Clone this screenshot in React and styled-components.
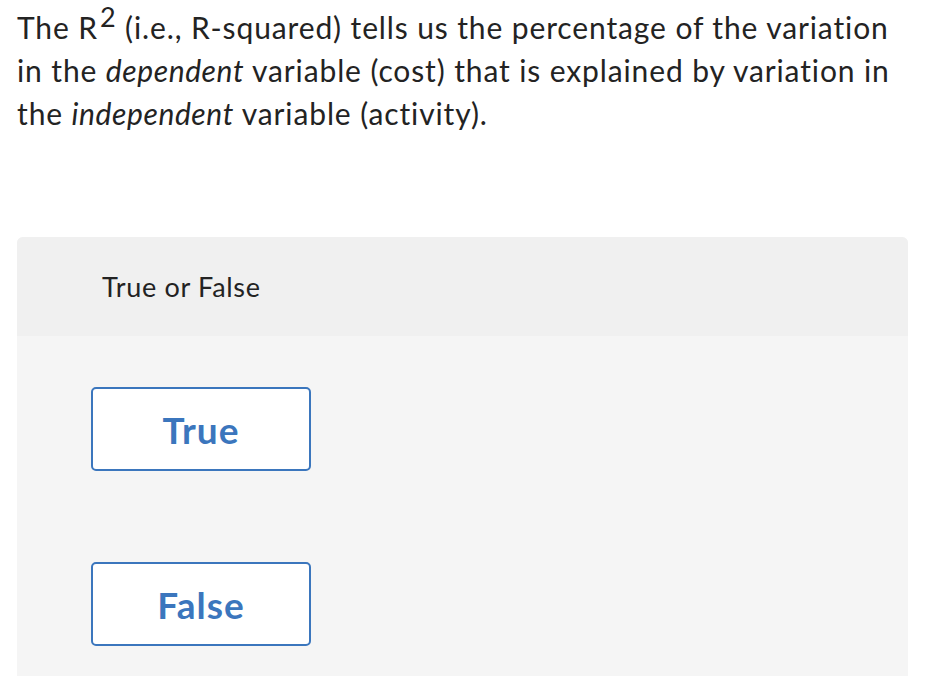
import React from "react"
import styled, { createGlobalStyle } from "styled-components"

const GlobalStyle = createGlobalStyle`
  body {
    margin: 0;
    background: #fff;
    font-family: Lato, "Open Sans", sans-serif;
    color: #232323;
  }
`

const Page = styled.div`
  padding: 6px 30px 0 17px;
`

const Prompt = styled.p`
  margin: 0;
  font-size: 30px;
  line-height: 43px;
  letter-spacing: 0.88px;
  color: #232323;

  sup {
    font-size: 27px;
    line-height: 0;
    vertical-align: 12px;
    margin-left: 2px;
  }
  em {
    font-style: italic;
    letter-spacing: 0.6px;
  }
`

const Panel = styled.div`
  margin-top: 102px;
  width: 891px;
  border-radius: 6px 6px 0 0;
  overflow: hidden;
  background: #f5f5f5;
`

const PanelHeader = styled.div`
  height: 99px;
  background: #f0f0f0;
  display: flex;
  align-items: center;
  padding-left: 85px;
  font-size: 27px;
  letter-spacing: 0.7px;
  color: #232323;
`

const Choices = styled.div`
  display: flex;
  flex-direction: column;
  gap: 91px;
  padding: 51px 0 40px 74px;
`

const Choice = styled.button`
  width: 220px;
  height: 84px;
  box-sizing: border-box;
  background: #fff;
  border: 2px solid #3b76bd;
  border-radius: 5px;
  font-family: Lato, sans-serif;
  font-weight: 700;
  font-size: 37px;
  letter-spacing: 1px;
  color: #3b76bd;
  cursor: pointer;
`

export default function App() {
  return (
    <Page>
      <GlobalStyle />
      <Prompt>
        The R<sup>2</sup> (i.e., R-squared) tells us the percentage of the variation in the{" "}
        <em>dependent</em> variable (cost) that is explained by variation in the{" "}
        <em>independent</em> variable (activity).
      </Prompt>
      <Panel>
        <PanelHeader>True or False</PanelHeader>
        <Choices>
          <Choice>True</Choice>
          <Choice>False</Choice>
        </Choices>
      </Panel>
    </Page>
  )
}
